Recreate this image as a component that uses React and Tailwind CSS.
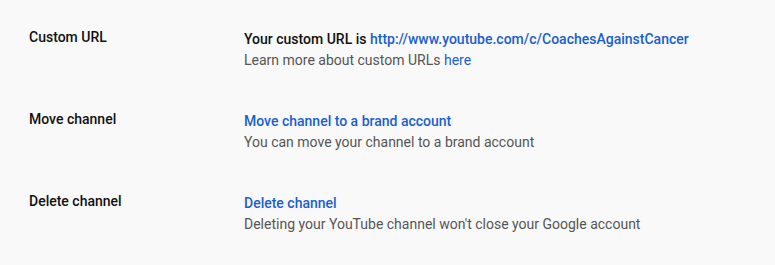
export default function App() {
  const rows = [
    {
      label: 'Custom URL',
      first: (
        <span className="text-[#111]">
          Your custom URL is{' '}
          <a className="text-[#1a5fd0]">http://www.youtube.com/c/CoachesAgainstCancer</a>
        </span>
      ),
      second: (
        <span>
          Learn more about custom URLs <a className="text-[#1a5fd0]">here</a>
        </span>
      ),
    },
    {
      label: 'Move channel',
      first: <a className="text-[#1a5fd0] font-medium">Move channel to a brand account</a>,
      second: <span>You can move your channel to a brand account</span>,
    },
    {
      label: 'Delete channel',
      first: <a className="text-[#1a5fd0] font-medium">Delete channel</a>,
      second: <span>Deleting your YouTube channel won't close your Google account</span>,
    },
  ];

  return (
    <div className="w-[775px] h-[265px] bg-[#f9f9f9] pl-[29px] pt-[27px] font-['Roboto',sans-serif] flex flex-col gap-[38px]">
      {rows.map((row) => (
        <div key={row.label} className="flex">
          <div className="w-[215px] text-[14px] leading-[20px] font-medium text-[#111]">{row.label}</div>
          <div className="pt-[2px] text-[14px] leading-[21px]">
            <div className="font-medium">{row.first}</div>
            <div className="text-[#555]">{row.second}</div>
          </div>
        </div>
      ))}
    </div>
  );
}
